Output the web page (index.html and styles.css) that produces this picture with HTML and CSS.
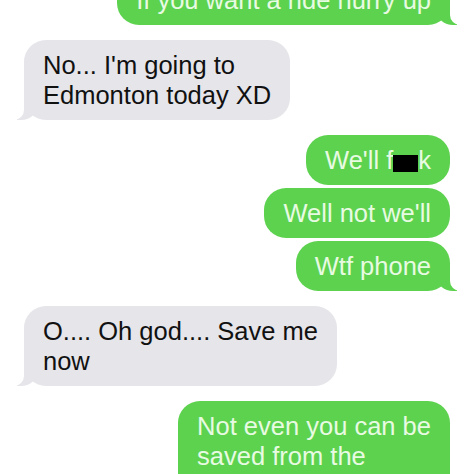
FILE: index.html
```html
<!DOCTYPE html>
<html lang="en">
<head>
    <meta charset="UTF-8">
    <meta name="viewport" content="width=device-width, initial-scale=1.0">
    <title>Messages</title>
    <link rel="stylesheet" href="styles.css">
</head>
<body>
    <div class="thread">
        <div class="group me">
            <div class="bubble tail">If you want a ride hurry up</div>
        </div>
        <div class="group them">
            <div class="bubble tail">No... I'm going to<br>Edmonton today XD</div>
        </div>
        <div class="group me">
            <div class="bubble">We'll f<span class="censor"></span>k</div>
            <div class="bubble">Well not we'll</div>
            <div class="bubble tail">Wtf phone</div>
        </div>
        <div class="group them">
            <div class="bubble tail">O.... Oh god.... Save me<br>now</div>
        </div>
        <div class="group me">
            <div class="bubble last">Not even you can be<br>saved from the</div>
        </div>
    </div>
</body>
</html>
```

FILE: styles.css
```css
body {
    margin: 0;
    background: #fff;
    font-family: "Liberation Sans", Arial, sans-serif;
    overflow: hidden;
    height: 474px;
}
.thread {
    display: flex;
    flex-direction: column;
    gap: 15px;
    padding: 0 24px;
    margin-top: -25px;
}
.group {
    display: flex;
    flex-direction: column;
    gap: 3px;
}
.group.me {
    align-items: flex-end;
}
.group.them {
    align-items: flex-start;
}
.bubble {
    position: relative;
    padding: 10px 19px;
    font-size: 25.5px;
    line-height: 30px;
    border-radius: 22px;
    white-space: nowrap;
}
/* runs on past the bottom of the screen */
.bubble.last {
    padding-bottom: 40px;
}
.me .bubble {
    background: #5dd24f;
    color: #e8fbe2;
}
.them .bubble {
    background: #e5e5ea;
    color: #111;
}
.censor {
    display: inline-block;
    width: 25px;
    height: 17px;
    background: #000;
    vertical-align: -3px;
}
/* tail hooks */
.bubble.tail::before,
.bubble.tail::after {
    content: "";
    position: absolute;
    bottom: 0;
    height: 25px;
}
.me .bubble.tail::before {
    right: -7px;
    width: 20px;
    background: #5dd24f;
    border-bottom-left-radius: 16px 14px;
}
.me .bubble.tail::after {
    right: -26px;
    width: 26px;
    background: #fff;
    border-bottom-left-radius: 10px;
}
.them .bubble.tail::before {
    left: -7px;
    width: 20px;
    background: #e5e5ea;
    border-bottom-right-radius: 16px 14px;
}
.them .bubble.tail::after {
    left: -26px;
    width: 26px;
    background: #fff;
    border-bottom-right-radius: 10px;
}
```
